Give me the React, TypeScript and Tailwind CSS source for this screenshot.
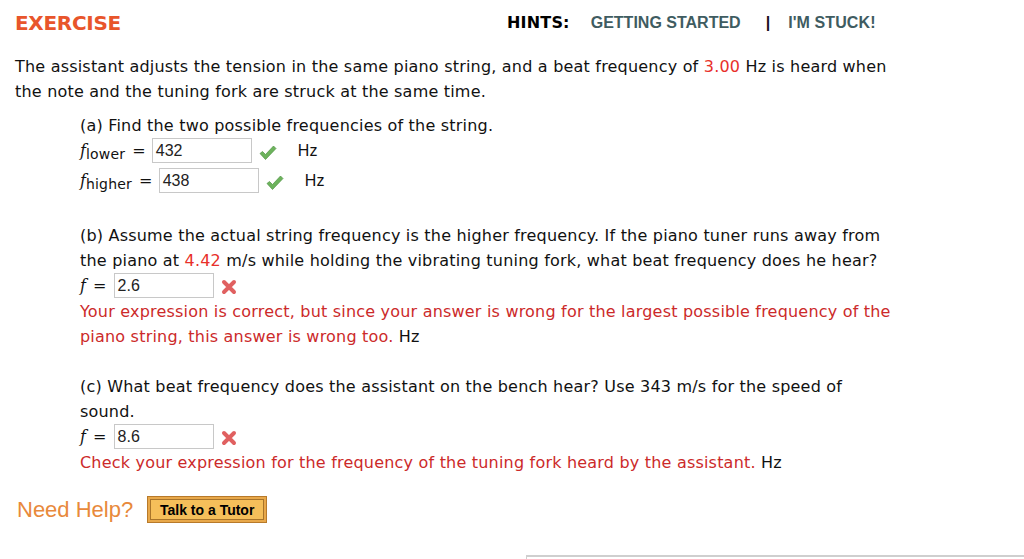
import React from "react";

const Check = () => (
  <svg width="18" height="16" viewBox="0 0 18 16" className="inline-block">
    <path d="M1 8.5 L6.5 14.5 L17 3.5 L14.5 1 L6.5 9.5 L3.5 6.5 Z" fill="#6db35c" stroke="#4f9444" strokeWidth="0.7" strokeLinejoin="round" />
  </svg>
);

const Cross = () => (
  <svg width="16" height="16" viewBox="0 0 16 16" className="inline-block">
    <path d="M3 3 L13 13 M13 3 L3 13" stroke="#e06060" strokeWidth="4" strokeLinecap="round" />
  </svg>
);

const Input = ({ value }: { value: string }) => (
  <span className="inline-flex items-center w-[100px] h-[25px] border border-[#c8c8c8] bg-white px-[3px] text-[16px] tracking-normal text-[#222] font-['Liberation_Sans',Arial,sans-serif] align-middle">
    {value}
  </span>
);

const F = () => <span className="font-['DejaVu_Serif','Liberation_Serif',serif] italic text-[16px] tracking-normal">f</span>;

export default function App() {
  return (
    <div className="w-[1024px] h-[559px] bg-white relative overflow-hidden font-['DejaVu_Sans',Verdana,sans-serif] text-[16px] tracking-[0.2px] text-[#111] leading-[25px]">
      <div className="flex items-end pt-[11px] px-[15px] h-[35px] tracking-normal">
        <div className="font-['DejaVu_Sans',Verdana,sans-serif] font-bold text-[20px] text-[#e8552b] leading-[24px] tracking-[-0.3px]">EXERCISE</div>
        <div className="ml-[386px] flex items-center font-['Liberation_Sans',Arial,sans-serif] font-bold text-[16px] leading-[24px]">
          <span className="text-black font-['DejaVu_Sans',Verdana,sans-serif] text-[16px] tracking-[0.2px]">HINTS:</span>
          <span className="ml-[21px] text-[#3f5c61]">GETTING STARTED</span>
          <span className="ml-[25px] text-[#1a1020]">|</span>
          <span className="ml-[18px] text-[#3f5c61] tracking-[0.1px]">I'M STUCK!</span>
        </div>
      </div>

      <div className="px-[15px] mt-[19px]">
        <p>
          The assistant adjusts the tension in the same piano string, and a beat frequency of{" "}
          <span className="text-[#e8302a]">3.00</span> Hz is heard when
          <br />
          the note and the tuning fork are struck at the same time.
        </p>
      </div>

      <div className="pl-[80px] pr-[20px] mt-[9px]">
        <p>(a) Find the two possible frequencies of the string.</p>
        <div className="flex items-center h-[30px] -mt-[3px]">
          <F />
          <span className="text-[14px] relative top-[4px]">lower</span>
          <span className="ml-[7px] mr-[6px]">=</span>
          <Input value="432" />
          <span className="ml-[7px] mt-[3px]"><Check /></span>
          <span className="ml-[21px] font-['Liberation_Sans',Arial,sans-serif]">Hz</span>
        </div>
        <div className="flex items-center h-[30px]">
          <F />
          <span className="text-[14px] relative top-[4px]">higher</span>
          <span className="ml-[7px] mr-[6px]">=</span>
          <Input value="438" />
          <span className="ml-[7px] mt-[3px]"><Check /></span>
          <span className="ml-[21px] font-['Liberation_Sans',Arial,sans-serif]">Hz</span>
        </div>

        <p className="mt-[28px]">
          (b) Assume the actual string frequency is the higher frequency. If the piano tuner runs away from
          <br />
          the piano at <span className="text-[#e8302a]">4.42</span> m/s while holding the vibrating tuning fork, what beat frequency does he hear?
        </p>
        <div className="flex items-center h-[26px] -mt-[1px]">
          <F />
          <span className="ml-[7px] mr-[7px]">=</span>
          <Input value="2.6" />
          <span className="ml-[7px] mt-[2px]"><Cross /></span>
        </div>
        <p className="mt-[1px]">
          <span className="text-[#cc2a2a]">
            Your expression is correct, but since your answer is wrong for the largest possible frequency of the
            <br />
            piano string, this answer is wrong too.
          </span>{" "}
          Hz
        </p>

        <p className="mt-[25px]">
          (c) What beat frequency does the assistant on the bench hear? Use 343 m/s for the speed of
          <br />
          sound.
        </p>
        <div className="flex items-center h-[26px] -mt-[1px]">
          <F />
          <span className="ml-[7px] mr-[7px]">=</span>
          <Input value="8.6" />
          <span className="ml-[7px] mt-[2px]"><Cross /></span>
        </div>
        <p className="mt-[1px]">
          <span className="text-[#cc2a2a]">Check your expression for the frequency of the tuning fork heard by the assistant.</span> Hz
        </p>
      </div>

      <div className="flex items-center pl-[17px] mt-[21px] tracking-normal">
        <span className="font-['Liberation_Sans',Arial,sans-serif] text-[22px] text-[#e8893b] leading-[26px]">Need Help?</span>
        <span className="ml-[14px] inline-flex items-center justify-center w-[120px] h-[27px] bg-[#e8a84a] border border-[#b87a2a] p-[2px]">
          <span className="flex items-center justify-center w-full h-full bg-[#f5bf5a] border border-[#a8742a] font-['Liberation_Sans',Arial,sans-serif] font-bold text-[14px] text-black leading-none">
            Talk to a Tutor
          </span>
        </span>
      </div>

      <div className="absolute left-[526px] top-[555px] w-[520px] h-[10px] border-t-2 border-l border-[#cfcfcf]" />
    </div>
  );
}
